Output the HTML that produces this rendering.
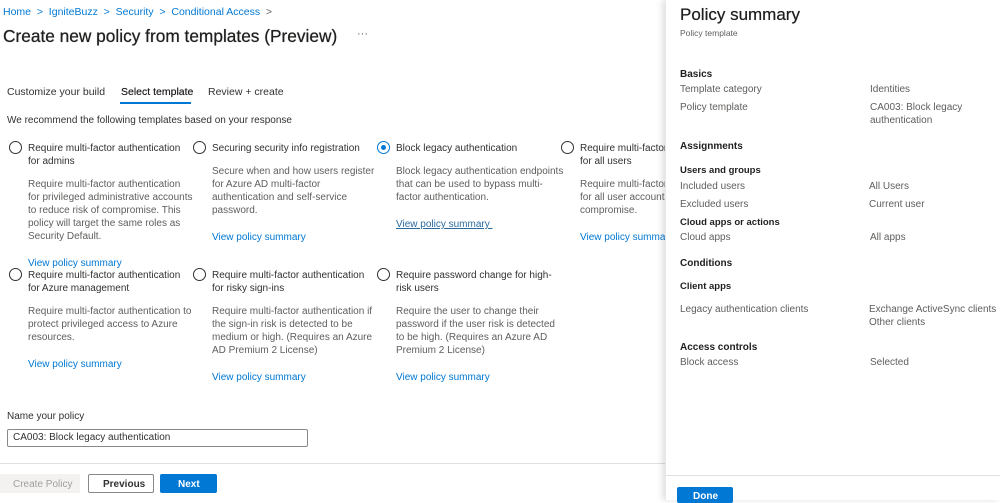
<!DOCTYPE html>
<html><head><style>
*{margin:0;padding:0;box-sizing:border-box}
body{width:1000px;height:500px;overflow:hidden;background:#fff;font-family:"Liberation Sans",sans-serif;font-size:10px;color:#323130;position:relative}
.a{position:absolute;white-space:nowrap;line-height:13px}
.g{color:#605e5c}
.l{color:#0078d4}
.r{position:absolute;width:13px;height:13px;border:1px solid #323130;border-radius:50%;background:#fff}
.b{font-weight:bold;color:#201f1e}
</style></head><body>
<div class="a l" style="left:3px;top:6px;font-size:10.5px">Home &nbsp;&gt;&nbsp; IgniteBuzz &nbsp;&gt;&nbsp; Security &nbsp;&gt;&nbsp; Conditional Access &nbsp;<span style="color:#605e5c">&gt;</span></div>
<div class="a" style="left:3px;top:26px;font-size:17.3px;line-height:20px;color:#201f1e;text-shadow:0 0 0.6px #201f1e">Create new policy from templates (Preview)</div>
<div class="a g" style="left:357px;top:28px;font-size:11px">···</div>
<div class="a" style="left:7px;top:86px;font-size:10.5px">Customize your build</div>
<div class="a b" style="left:121px;top:86px;font-size:10.5px;font-weight:normal;color:#201f1e;text-shadow:0 0 0.4px #201f1e">Select template</div>
<div style="position:absolute;left:120px;top:102px;width:71px;height:2px;background:#0078d4"></div>
<div class="a" style="left:208px;top:86px;font-size:10.5px">Review + create</div>
<div class="a" style="left:7px;top:114px">We recommend the following templates based on your response</div>

<div class="r" style="left:9px;top:141px"></div>
<div class="a" style="left:28px;top:142px">Require multi-factor authentication<br>for admins</div>
<div class="a g" style="left:28px;top:178px">Require multi-factor authentication<br>for privileged administrative accounts<br>to reduce risk of compromise. This<br>policy will target the same roles as<br>Security Default.</div>
<div class="a l" style="left:28px;top:257px">View policy summary</div>

<div class="r" style="left:193px;top:141px"></div>
<div class="a" style="left:212px;top:142px">Securing security info registration</div>
<div class="a g" style="left:212px;top:165px">Secure when and how users register<br>for Azure AD multi-factor<br>authentication and self-service<br>password.</div>
<div class="a l" style="left:212px;top:231px">View policy summary</div>

<div class="r" style="left:377px;top:141px;border-color:#0078d4"><div style="position:absolute;left:3px;top:3px;width:5px;height:5px;border-radius:50%;background:#0078d4"></div></div>
<div class="a" style="left:396px;top:142px">Block legacy authentication</div>
<div class="a g" style="left:396px;top:165px">Block legacy authentication endpoints<br>that can be used to bypass multi-<br>factor authentication.</div>
<div class="a" style="left:396px;top:218px;color:#2b6a9e;text-decoration:underline">View policy summary&nbsp;</div>

<div class="r" style="left:561px;top:141px"></div>
<div class="a" style="left:580px;top:142px">Require multi-factor a<br>for all users</div>
<div class="a g" style="left:580px;top:178px">Require multi-factor a<br>for all user accounts t<br>compromise.</div>
<div class="a l" style="left:580px;top:231px">View policy summary</div>

<div class="r" style="left:9px;top:268px"></div>
<div class="a" style="left:28px;top:269px">Require multi-factor authentication<br>for Azure management</div>
<div class="a g" style="left:28px;top:305px">Require multi-factor authentication to<br>protect privileged access to Azure<br>resources.</div>
<div class="a l" style="left:28px;top:358px">View policy summary</div>

<div class="r" style="left:193px;top:268px"></div>
<div class="a" style="left:212px;top:269px">Require multi-factor authentication<br>for risky sign-ins</div>
<div class="a g" style="left:212px;top:305px">Require multi-factor authentication if<br>the sign-in risk is detected to be<br>medium or high. (Requires an Azure<br>AD Premium 2 License)</div>
<div class="a l" style="left:212px;top:371px">View policy summary</div>

<div class="r" style="left:377px;top:268px"></div>
<div class="a" style="left:396px;top:269px">Require password change for high-<br>risk users</div>
<div class="a g" style="left:396px;top:305px">Require the user to change their<br>password if the user risk is detected<br>to be high. (Requires an Azure AD<br>Premium 2 License)</div>
<div class="a l" style="left:396px;top:371px">View policy summary</div>

<div class="a" style="left:7px;top:410px">Name your policy</div>
<div style="position:absolute;left:7px;top:429px;width:301px;height:18px;border:1px solid #8a8886;border-radius:2px"></div>
<div class="a" style="left:13px;top:431px">CA003: Block legacy authentication</div>
<div style="position:absolute;left:0;top:463px;width:665px;height:1px;background:#e1dfdd"></div>
<div style="position:absolute;left:0;top:474px;width:80px;height:19px;background:#f3f2f1"></div>
<div class="a" style="left:13px;top:478px;color:#a19f9d">Create Policy</div>
<div style="position:absolute;left:88px;top:474px;width:66px;height:19px;border:1px solid #8a8886;border-radius:2px"></div>
<div class="a" style="left:103px;top:478px;font-weight:bold;color:#323130">Previous</div>
<div style="position:absolute;left:160px;top:474px;width:57px;height:19px;background:#0078d4;border-radius:2px"></div>
<div class="a" style="left:178px;top:478px;font-weight:bold;color:#fff">Next</div>

<div style="position:absolute;left:665px;top:0;width:335px;height:500px;background:#fff;box-shadow:-3px 0 6px rgba(0,0,0,0.12);border-left:1px solid #e8e8e8"></div>
<div class="a" style="left:680px;top:5px;font-size:17px;line-height:20px;color:#201f1e;text-shadow:0 0 0.5px #201f1e">Policy summary</div>
<div class="a g" style="left:680px;top:27px;font-size:8.5px">Policy template</div>
<div class="a b" style="left:680px;top:68px">Basics</div>
<div class="a g" style="left:680px;top:83px">Template category</div>
<div class="a g" style="left:870px;top:83px">Identities</div>
<div class="a g" style="left:680px;top:101px">Policy template</div>
<div class="a g" style="left:870px;top:101px">CA003: Block legacy<br>authentication</div>
<div class="a b" style="left:680px;top:140px">Assignments</div>
<div class="a b" style="left:680px;top:164px;font-size:9.5px">Users and groups</div>
<div class="a g" style="left:680px;top:180px">Included users</div>
<div class="a g" style="left:869px;top:180px">All Users</div>
<div class="a g" style="left:680px;top:198px">Excluded users</div>
<div class="a g" style="left:869px;top:198px">Current user</div>
<div class="a b" style="left:680px;top:216px;font-size:9.5px">Cloud apps or actions</div>
<div class="a g" style="left:680px;top:231px">Cloud apps</div>
<div class="a g" style="left:870px;top:231px">All apps</div>
<div class="a b" style="left:680px;top:257px">Conditions</div>
<div class="a b" style="left:680px;top:280px;font-size:9.5px">Client apps</div>
<div class="a g" style="left:680px;top:303px">Legacy authentication clients</div>
<div class="a g" style="left:869px;top:303px">Exchange ActiveSync clients<br>Other clients</div>
<div class="a b" style="left:680px;top:341px">Access controls</div>
<div class="a g" style="left:680px;top:356px">Block access</div>
<div class="a g" style="left:870px;top:356px">Selected</div>
<div style="position:absolute;left:666px;top:475px;width:334px;height:1px;background:#e1dfdd"></div>
<div style="position:absolute;left:677px;top:487px;width:56px;height:16px;background:#0078d4;border-radius:2px"></div>
<div class="a" style="left:693px;top:490px;font-weight:bold;color:#fff">Done</div>
</body></html>
